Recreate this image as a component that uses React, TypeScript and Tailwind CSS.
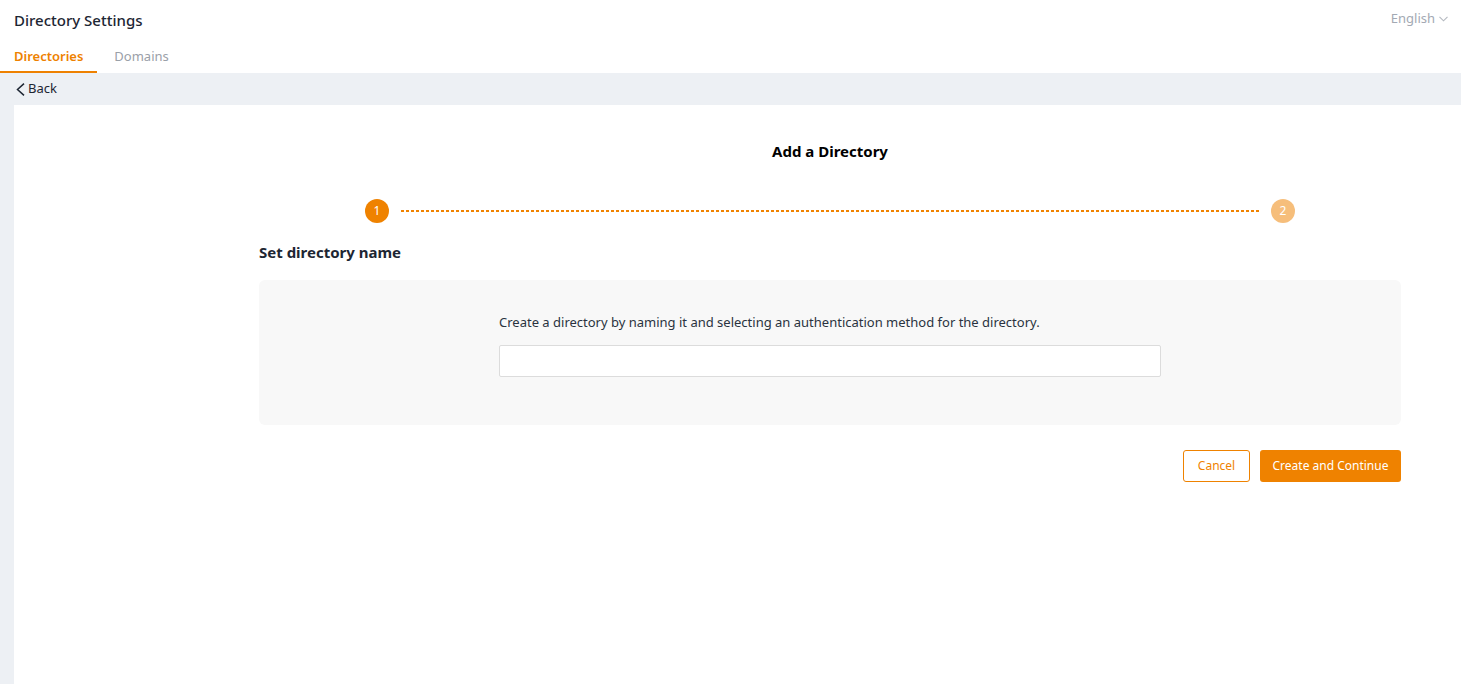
const TABS = [
  { label: "Directories", active: true },
  { label: "Domains", active: false },
];

export default function App() {
  return (
    <div className="flex h-[684px] flex-col bg-white font-['Noto_Sans',sans-serif] text-[#1f2937]">
      <header className="flex h-[40px] items-start justify-between pl-[14px] pr-[13px] pt-[9px]">
        <h1 className="text-[15px] font-medium leading-[22px] text-[#1d2633]">Directory Settings</h1>
        <button className="flex items-center gap-[4px] text-[13px] text-[#a3a9b3]">
          English
          <svg width="9" height="6" viewBox="0 0 9 6" fill="none" stroke="#b4b9c0" strokeWidth="1.1">
            <polyline points="0.5,0.8 4.5,4.8 8.5,0.8" />
          </svg>
        </button>
      </header>

      <nav className="flex h-[33px]">
        {TABS.map((tab) => (
          <div
            key={tab.label}
            className={`flex items-center border-b-2 pt-[3px] text-[13px] ${
              tab.active
                ? "border-[#ee8100] px-[14px] font-semibold text-[#ee8100]"
                : "border-transparent pl-[17px] pr-[14px] text-[#9aa0a8]"
            }`}
          >
            {tab.label}
          </div>
        ))}
      </nav>

      <div className="flex flex-1 flex-col bg-[#edf0f4]">
        <div className="flex h-[32px] items-center gap-[3px] pl-[16px] text-[13px] text-[#1d2633]">
          <svg width="9" height="13" viewBox="0 0 9 13" fill="none" stroke="#1d2633" strokeWidth="1.5">
            <polyline points="8,0.6 1.5,6.5 8,12.4" />
          </svg>
          Back
        </div>

        <main className="ml-[14px] flex-1 bg-white pl-[245px] pr-[60px]">
          <h2 className="pt-[36px] text-center text-[15px] font-bold leading-[20px] text-black">
            Add a Directory
          </h2>

          <div className="mt-[38px] flex items-center px-[106px]">
            <span className="flex h-[24px] w-[24px] items-center justify-center rounded-full bg-[#ef8200] text-[12px] text-white">
              1
            </span>
            <span className="mx-[12px] h-[2px] flex-1 bg-[linear-gradient(to_right,#ef8200_3px,transparent_3px)] bg-[length:5px_2px]" />
            <span className="flex h-[24px] w-[24px] items-center justify-center rounded-full bg-[#f6be7b] text-[12px] text-white">
              2
            </span>
          </div>

          <h3 className="mt-[18px] text-[15px] font-bold leading-[22px] text-[#1d2633]">Set directory name</h3>

          <section className="mt-[17px] flex h-[145px] justify-center rounded-[6px] bg-[#f8f8f8] pt-[33px]">
            <div className="w-[662px]">
              <p className="text-[13px] leading-[18px] text-[#2a3340]">
                Create a directory by naming it and selecting an authentication method for the directory.
              </p>
              <input
                type="text"
                className="mt-[14px] h-[32px] w-full rounded-[2px] border border-[#dcdcdc] bg-white px-[8px] text-[13px] outline-none"
              />
            </div>
          </section>

          <div className="mt-[25px] flex justify-end gap-[10px]">
            <button className="h-[32px] w-[67px] rounded-[3px] border border-[#ef8200] bg-white text-[12px] text-[#ef8200]">
              Cancel
            </button>
            <button className="h-[32px] w-[141px] rounded-[3px] bg-[#ef8200] text-[12px] text-white">
              Create and Continue
            </button>
          </div>
        </main>
      </div>
    </div>
  );
}
